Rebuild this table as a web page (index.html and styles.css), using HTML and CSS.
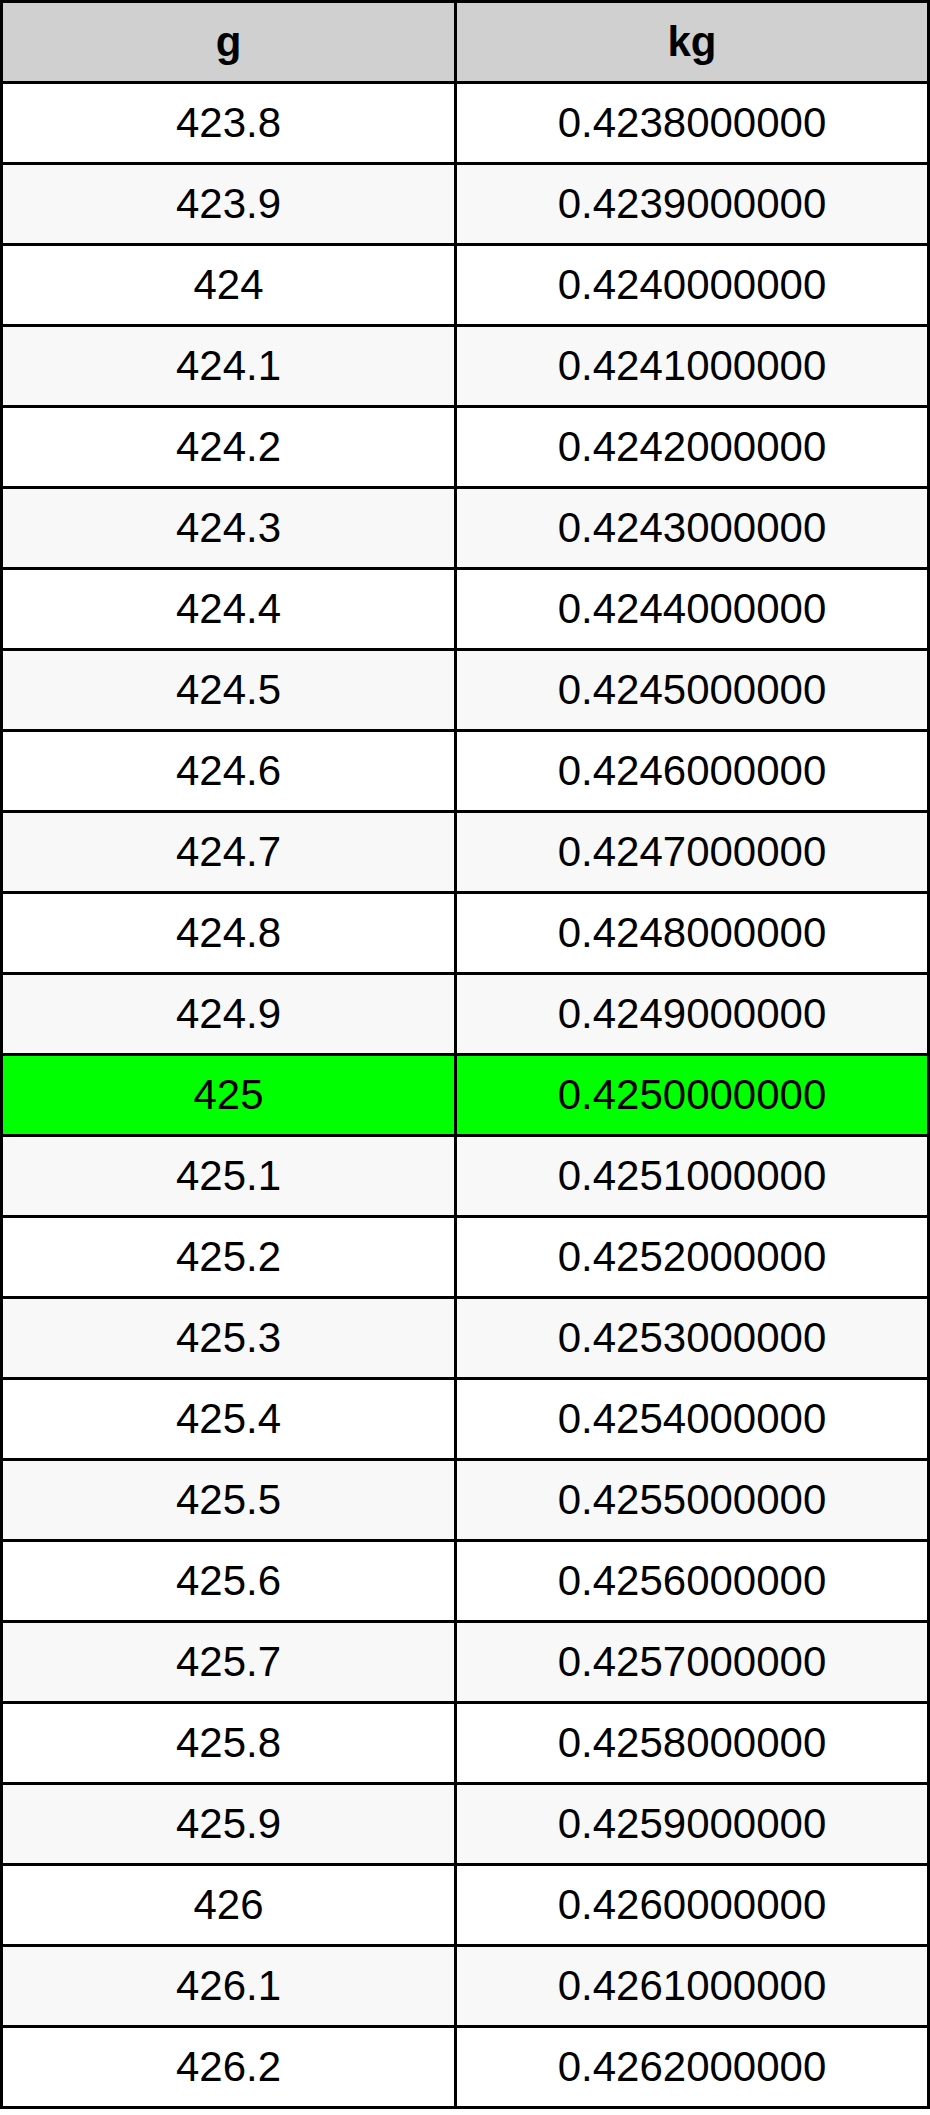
FILE: index.html
```html
<!DOCTYPE html>
<html>
<head>
<meta charset="utf-8">
<link rel="stylesheet" href="styles.css">
</head>
<body>
<table class="conv">
<thead>
<tr><th class="c1">g</th><th class="c2">kg</th></tr>
</thead>
<tbody>
<tr><td>423.8</td><td>0.4238000000</td></tr>
<tr><td>423.9</td><td>0.4239000000</td></tr>
<tr><td>424</td><td>0.4240000000</td></tr>
<tr><td>424.1</td><td>0.4241000000</td></tr>
<tr><td>424.2</td><td>0.4242000000</td></tr>
<tr><td>424.3</td><td>0.4243000000</td></tr>
<tr><td>424.4</td><td>0.4244000000</td></tr>
<tr><td>424.5</td><td>0.4245000000</td></tr>
<tr><td>424.6</td><td>0.4246000000</td></tr>
<tr><td>424.7</td><td>0.4247000000</td></tr>
<tr><td>424.8</td><td>0.4248000000</td></tr>
<tr><td>424.9</td><td>0.4249000000</td></tr>
<tr class="hl"><td>425</td><td>0.4250000000</td></tr>
<tr><td>425.1</td><td>0.4251000000</td></tr>
<tr><td>425.2</td><td>0.4252000000</td></tr>
<tr><td>425.3</td><td>0.4253000000</td></tr>
<tr><td>425.4</td><td>0.4254000000</td></tr>
<tr><td>425.5</td><td>0.4255000000</td></tr>
<tr><td>425.6</td><td>0.4256000000</td></tr>
<tr><td>425.7</td><td>0.4257000000</td></tr>
<tr><td>425.8</td><td>0.4258000000</td></tr>
<tr><td>425.9</td><td>0.4259000000</td></tr>
<tr><td>426</td><td>0.4260000000</td></tr>
<tr><td>426.1</td><td>0.4261000000</td></tr>
<tr><td>426.2</td><td>0.4262000000</td></tr>
</tbody>
</table>
</body>
</html>
```
FILE: styles.css
```css
html, body {
  margin: 0;
  padding: 0;
  background: #ffffff;
}
.conv {
  width: 930px;
  border-collapse: collapse;
  table-layout: fixed;
  font-family: "Liberation Sans", Arial, Helvetica, sans-serif;
  font-size: 42px;
  color: #000;
}
.conv th, .conv td {
  border: 3px solid #000;
  height: 78px;
  padding: 0;
  text-align: center;
  vertical-align: middle;
  box-sizing: content-box;
  line-height: 1;
}
.conv th {
  background: #d0d0d0;
  font-weight: bold;
}
.conv .c1 { width: 451px; }
.conv .c2 { width: 470px; }
.conv tbody tr { background: #ffffff; }
.conv tbody tr:nth-child(even) { background: #f8f8f8; }
.conv tbody tr.hl { background: #00ff00; }
```
